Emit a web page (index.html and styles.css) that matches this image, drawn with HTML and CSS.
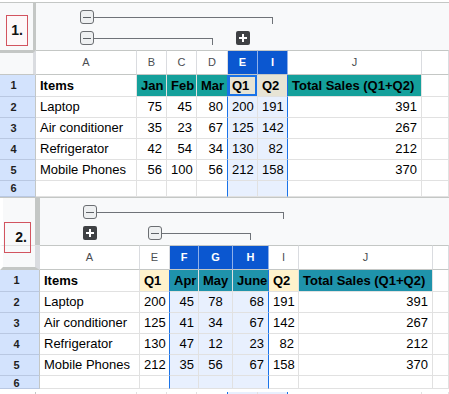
FILE: index.html
```html
<!DOCTYPE html>
<html lang="en">
<head>
    <meta charset="UTF-8">
    <meta name="viewport" content="width=device-width, initial-scale=1.0">
    <title>Grouped columns</title>
    <link rel="stylesheet" href="styles.css">
</head>
<body>
    <!-- 1. columns F:H collapsed -->
    <section class="sheet one">
        <div class="groups">
            <div class="corner"><span class="tag">1.</span></div>
            <span class="bracket g1-line"></span>
            <span class="tog minus g1-btn"></span>
            <span class="bracket g2-line"></span>
            <span class="tog minus g2-btn"></span>
            <span class="tog plus g2-plus"></span>
        </div>

        <div class="row head">
            <div></div><div>A</div><div>B</div><div>C</div><div>D</div>
            <div class="on">E</div><div class="on">I</div><div>J</div><div></div>
        </div>
        <div class="row first">
            <div>1</div><div class="b">Items</div>
            <div class="b t">Jan</div><div class="b t">Feb</div><div class="b t">Mar</div>
            <div class="b q active">Q1</div><div class="b q">Q2</div>
            <div class="b t">Total Sales (Q1+Q2)</div><div></div>
        </div>
        <div class="row">
            <div>2</div><div>Laptop</div><div class="n">75</div><div class="n">45</div><div class="n">80</div>
            <div class="n">200</div><div class="n">191</div><div class="n">391</div><div></div>
        </div>
        <div class="row">
            <div>3</div><div>Air conditioner</div><div class="n">35</div><div class="n">23</div><div class="n">67</div>
            <div class="n">125</div><div class="n">142</div><div class="n">267</div><div></div>
        </div>
        <div class="row">
            <div>4</div><div>Refrigerator</div><div class="n">42</div><div class="n">54</div><div class="n">34</div>
            <div class="n">130</div><div class="n">82</div><div class="n">212</div><div></div>
        </div>
        <div class="row">
            <div>5</div><div>Mobile Phones</div><div class="n">56</div><div class="n">100</div><div class="n">56</div>
            <div class="n">212</div><div class="n">158</div><div class="n">370</div><div></div>
        </div>
        <div class="row last">
            <div>6</div><div></div><div></div><div></div><div></div>
            <div></div><div></div><div></div><div></div>
        </div>
    </section>

    <!-- 2. columns B:D collapsed -->
    <section class="sheet two">
        <div class="groups">
            <div class="corner"><span class="tag">2.</span></div>
            <span class="bracket g1-line"></span>
            <span class="tog minus g1-btn"></span>
            <span class="tog plus g2-plus"></span>
            <span class="bracket g2-line"></span>
            <span class="tog minus g2-btn"></span>
        </div>

        <div class="row head">
            <div></div><div>A</div><div>E</div>
            <div class="on">F</div><div class="on">G</div><div class="on">H</div>
            <div>I</div><div>J</div><div></div>
        </div>
        <div class="row first">
            <div>1</div><div class="b">Items</div><div class="b q">Q1</div>
            <div class="b t">Apr</div><div class="b t">May</div><div class="b t">June</div>
            <div class="b q">Q2</div><div class="b t">Total Sales (Q1+Q2)</div><div></div>
        </div>
        <div class="row">
            <div>2</div><div>Laptop</div><div class="n">200</div><div class="n">45</div><div class="c">78</div>
            <div class="n">68</div><div class="n">191</div><div class="n">391</div><div></div>
        </div>
        <div class="row">
            <div>3</div><div>Air conditioner</div><div class="n">125</div><div class="n">41</div><div class="c">34</div>
            <div class="n">67</div><div class="n">142</div><div class="n">267</div><div></div>
        </div>
        <div class="row">
            <div>4</div><div>Refrigerator</div><div class="n">130</div><div class="n">47</div><div class="c">12</div>
            <div class="n">23</div><div class="n">82</div><div class="n">212</div><div></div>
        </div>
        <div class="row">
            <div>5</div><div>Mobile Phones</div><div class="n">212</div><div class="n">35</div><div class="c">56</div>
            <div class="n">67</div><div class="n">158</div><div class="n">370</div><div></div>
        </div>
        <div class="row last">
            <div>6</div><div></div><div></div><div></div><div></div>
            <div></div><div></div><div></div><div></div>
        </div>
    </section>

    <!-- top edge of the next screenshot -->
    <section class="sheet one tail">
        <div class="row">
            <div></div><div></div><div></div><div></div><div></div>
            <div></div><div></div><div></div><div></div>
        </div>
    </section>
</body>
</html>
```

FILE: styles.css
```css
* {
    margin: 0;
    padding: 0;
    box-sizing: border-box;
}

body {
    width: 449px;
    height: 394px;
    overflow: hidden;
    background: #fff;
    font-family: 'Liberation Sans', Arial, sans-serif;
    font-size: 13px;
    color: #000;
}

.sheet {
    border-top: 1px solid #c4c7c5;
}

.one {
    --cols: 36px 101px 30px 30px 31px 30px 30px 134px 1fr;
    margin-top: 2px;
}

.two {
    --cols: 40px 100px 30px 29px 34px 36px 30px 134px 1fr;
}

/* group bar above the column letters */
.groups {
    display: grid;
    grid-template-columns: var(--cols);
    grid-template-rows: 7px 14px 7px 14px 5px;
    background: #f8f9fa;
}

.corner {
    grid-column: 1;
    grid-row: 1 / -1;
    border-right: 3px solid #c4c7c5;
    padding-top: 12px;
    padding-left: 6px;
}

.two .corner {
    border-left: 3px solid #fff;
    border-right-width: 5px;
    padding-top: 24px;
    padding-left: 1px;
}

.tag {
    position: relative;
    z-index: 2;
    display: block;
    width: 22px;
    height: 31px;
    border: 1px solid #d2545f;
    background: rgba(255, 248, 248, 0.7);
    font-size: 14px;
    font-weight: bold;
    line-height: 29px;
    text-align: center;
    color: #111;
}

.two .tag {
    width: 27px;
    text-align: right;
    padding-right: 3px;
    background: transparent;
}

.bracket {
    height: 7px;
    margin-top: 7px;
    border-top: 1px solid #6f7378;
    border-right: 1px solid #6f7378;
}

.tog {
    position: relative;
    z-index: 1;
    justify-self: center;
    display: grid;
    place-items: center;
    width: 14px;
    height: 14px;
    border-radius: 3px;
}

.tog::before,
.tog::after {
    content: "";
    grid-area: 1 / 1;
}

.minus {
    border: 1.5px solid #6b6e72;
    background: #eef0f1;
}

.minus::before {
    width: 8px;
    height: 1px;
    background: #5f6368;
}

.plus {
    background: #3f4144;
    border-radius: 2px;
}

.plus::before {
    width: 8px;
    height: 2px;
    background: #fff;
}

.plus::after {
    width: 2px;
    height: 8px;
    background: #fff;
}

.g1-btn { grid-row: 2; grid-column: 2; }
.g1-line { grid-row: 2; grid-column: 2 / 8; margin-left: 50px; margin-right: 15px; }
.g2-btn { grid-row: 4; grid-column: 2; }
.g2-plus { grid-row: 4; }

.one .g2-line { grid-row: 4; grid-column: 2 / 6; margin-left: 50px; margin-right: 15px; }
.one .g2-plus { grid-column: 6; }

.two .g2-plus { grid-column: 2; }
.two .g2-btn { grid-column: 3; }
.two .g2-line { grid-row: 4; grid-column: 3 / 7; margin-left: 15px; margin-right: 18px; }

/* rows */
.row {
    display: grid;
    grid-template-columns: var(--cols);
    height: 21px;
}

.row > div {
    border-right: 1px solid #e1e1e1;
    border-bottom: 1px solid #e1e1e1;
    padding: 0 4px;
    line-height: 20px;
    white-space: nowrap;
    overflow: hidden;
}

.row > div:first-child {
    padding: 0 8px 0 0;
    text-align: center;
    font-size: 11px;
    font-weight: bold;
    color: #1f1f1f;
    background: #d3e3fd;
    border-right-color: #c4c7c5;
    border-bottom-color: #b9c8e2;
}

.two .row > div:first-child {
    padding-right: 6px;
}

.row.first {
    height: 22px;
}

.row.first > div {
    line-height: 21px;
}

.one .row.last {
    height: 16px;
}

.two .row.last {
    height: 13px;
}

.row.last > div {
    line-height: 14px;
}

/* column letters */
.row.head {
    height: 25px;
    background: #fff;
}

.row.head > div {
    border-top: 1px solid #c4c7c5;
    border-bottom-color: #c4c7c5;
    border-right-color: #dadce0;
    line-height: 23px;
    text-align: center;
    font-size: 11px;
    color: #4a4d51;
}

.row.head > div:first-child {
    background: #f8f9fa;
    border-top: 3px solid #c4c7c5;
    border-right: 3px solid #c4c7c5;
}

.two .row.head > div:first-child {
    border-top: 1px solid #e1e1e1;
    border-left: 3px solid #fff;
    border-right-width: 5px;
    border-bottom: 3px solid #c4c7c5;
}

/* selected columns */
.one .row > :nth-child(6),
.one .row > :nth-child(7),
.two .row > :nth-child(4),
.two .row > :nth-child(5),
.two .row > :nth-child(6) {
    background: #e8f0fe;
}

.one .row > :nth-child(5),
.one .row > :nth-child(7),
.two .row > :nth-child(3),
.two .row > :nth-child(6) {
    border-right-color: #1a73e8;
}

.row.head > div:nth-child(n) {
    border-right-color: #dadce0;
}

.row.head > .on:nth-child(n) {
    background: #0b57d0;
    color: #fff;
    font-weight: bold;
    border-right-color: #8fb0ea;
}

.b {
    font-weight: bold;
}

.t {
    background: #14a09b;
}

.q {
    background: #fff2cc;
}

.one .row > .q {
    background: #e7e4d5;
}

.two .row > .t:nth-child(n) {
    background: #1f93ab;
}

.active {
    box-shadow: inset 0 0 0 2px #1a73e8;
}

.n {
    text-align: right;
}

.c {
    text-align: center;
}

/* next capture peeking in at the bottom */
.tail {
    border-top: 1px solid #fff;
}

.tail .row {
    height: 8px;
}

.tail .row > div,
.tail .row > div:first-child {
    background: #fff;
    border-bottom: none;
}

.tail .row > :nth-child(6),
.tail .row > :nth-child(7) {
    background: #e8f0fe;
}
```
